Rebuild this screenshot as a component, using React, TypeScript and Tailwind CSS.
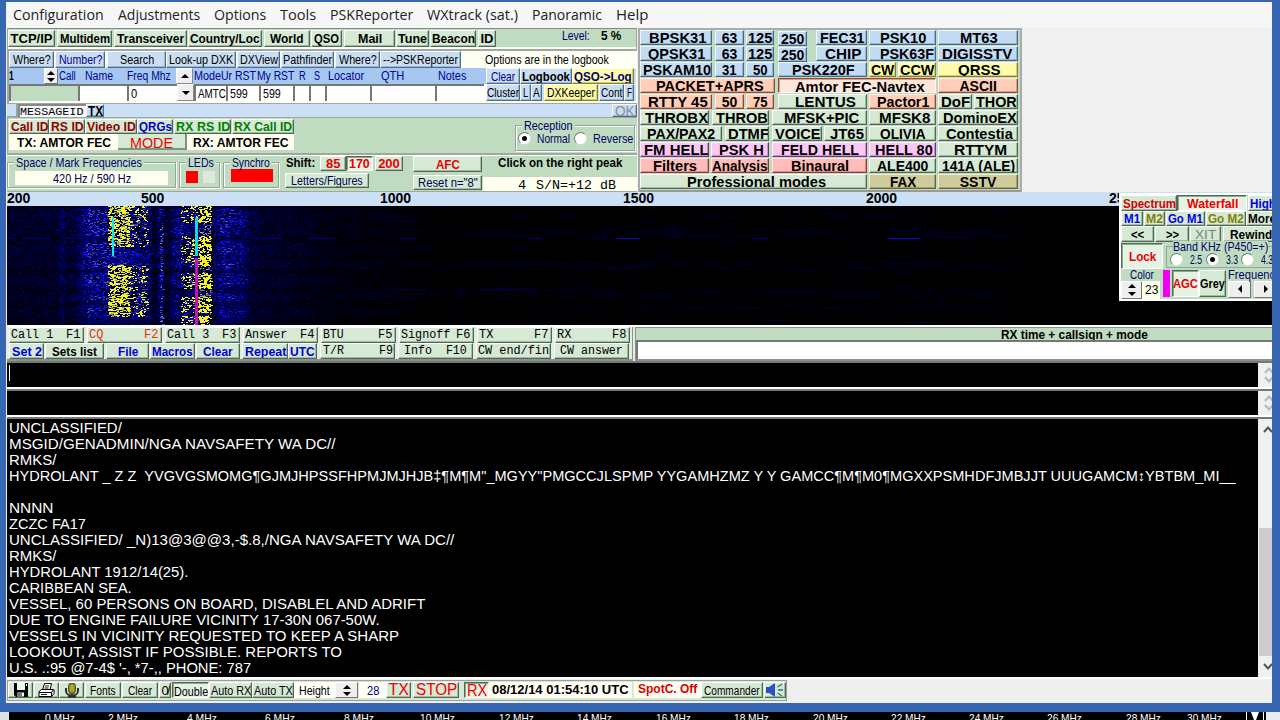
import React, { useLayoutEffect, useMemo, useRef, useState } from 'react';

type Tone = 'green' | 'blue' | 'sky' | 'salmon' | 'yellow' | 'pink' | 'red' | 'khaki' | 'sunken' | 'hatch' | 'cream';

const TONES: Record<Tone, string> = {
  green: 'bg-[#d5e9d5] border-t-white border-l-white border-b-[#4f6a52] border-r-[#4f6a52] shadow-[inset_-1px_-1px_0_#a3baa3]',
  blue: 'bg-[#c3dcf4] border-t-[#eef6ff] border-l-[#eef6ff] border-b-[#46688a] border-r-[#46688a] shadow-[inset_-1px_-1px_0_#93b4d4]',
  sky: 'bg-[#c9def3] border-t-[#f4faff] border-l-[#f4faff] border-b-[#4f6c88] border-r-[#4f6c88] shadow-[inset_-1px_-1px_0_#9db8d2]',
  salmon: 'bg-[#ffcdb8] border-t-[#ffeee6] border-l-[#ffeee6] border-b-[#8f4a38] border-r-[#8f4a38] shadow-[inset_-1px_-1px_0_#dd9c86]',
  yellow: 'bg-[#fdfba8] border-t-[#fffff0] border-l-[#fffff0] border-b-[#858322] border-r-[#858322] shadow-[inset_-1px_-1px_0_#d2d076]',
  pink: 'bg-[#fbc8f6] border-t-[#fff0ff] border-l-[#fff0ff] border-b-[#74307a] border-r-[#74307a] shadow-[inset_-1px_-1px_0_#cf92cf]',
  red: 'bg-[#ffbcb8] border-t-[#ffe8e6] border-l-[#ffe8e6] border-b-[#963636] border-r-[#963636] shadow-[inset_-1px_-1px_0_#dc8c88]',
  khaki: 'bg-[#cfcb9c] border-t-[#f0eed0] border-l-[#f0eed0] border-b-[#66633a] border-r-[#66633a] shadow-[inset_-1px_-1px_0_#a5a174]',
  sunken: 'bg-[#e6f2e4] border-t-[#4f6a52] border-l-[#4f6a52] border-b-white border-r-white shadow-[inset_1px_1px_0_#8fa890]',
  hatch: 'bg-[#fde6da] border-t-[#8f4a38] border-l-[#8f4a38] border-b-[#fff4ee] border-r-[#fff4ee] shadow-[inset_1px_1px_0_#dd9c86]',
  cream: 'bg-[#fffff0] border-transparent',
};

// Squeezes a label horizontally so that it takes exactly w pixels
const Fit: React.FC<{ w: number; className?: string; children: React.ReactNode }> = ({ w, className = '', children }) => {
  const ref = useRef<HTMLSpanElement>(null);
  const [scale, setScale] = useState(1);

  useLayoutEffect(() => {
    if (ref.current && ref.current.offsetWidth) setScale(w / ref.current.offsetWidth);
  }, [w, children]);

  return (
    <span className={`block shrink-0 whitespace-pre ${className}`} style={{ width: w }}>
      <span ref={ref} className="inline-block origin-left" style={{ transform: `scaleX(${scale})` }}>{children}</span>
    </span>
  );
};

interface BtnProps {
  tone?: Tone;
  w: number;
  c: string;
  children: React.ReactNode;
}

const Btn: React.FC<BtnProps> = ({ tone = 'green', w, c, children }) => (
  <button className={`flex h-full shrink-0 items-center justify-center overflow-hidden border leading-none ${TONES[tone]} ${c}`}>
    <Fit w={w}>{children}</Fit>
  </button>
);

const Group: React.FC<{ title: string; w: number; c: string; children: React.ReactNode }> = ({ title, w, c, children }) => (
  <div className={`flex shrink-0 flex-col border border-[#8fa890] shadow-[inset_1px_1px_0_#fff,1px_1px_0_#fff] ${c}`}>
    <div className="-mt-[7px] ml-[6px] h-[13px] self-start bg-[#c0dcc0] px-[2px] text-[13px] leading-[13px] text-[#00006a]">
      <Fit w={w}>{title}</Fit>
    </div>
    {children}
  </div>
);

const Radio: React.FC<{ on?: boolean }> = ({ on }) => (
  <span className="flex h-[13px] w-[13px] shrink-0 items-center justify-center rounded-full border border-b-[#ddd] border-r-[#ddd] border-l-[#777] border-t-[#777] bg-white">
    {on && <span className="h-[5px] w-[5px] rounded-full bg-black" />}
  </span>
);

const Arrow: React.FC<{ dir: 'up' | 'down' | 'left' | 'right' }> = ({ dir }) => {
  const d = { up: 'M0 4 4 0 8 4Z', down: 'M0 0 8 0 4 4Z', left: 'M4 0V8L0 4Z', right: 'M0 0V8L4 4Z' }[dir];
  const flat = dir === 'up' || dir === 'down';
  return <svg width={flat ? 8 : 4} height={flat ? 4 : 8} className="block"><path d={d} /></svg>;
};

const Spin: React.FC<{ c: string }> = ({ c }) => (
  <span className={`flex shrink-0 flex-col items-center justify-around border border-t-white border-l-white border-r-[#777] border-b-[#777] bg-[#efefef] ${c}`}>
    <Arrow dir="up" />
    <Arrow dir="down" />
  </span>
);

const Field: React.FC<{ c: string; children?: React.ReactNode }> = ({ c, children }) => (
  <span className={`flex h-full shrink-0 items-center overflow-hidden border-t-2 border-l-2 border-[#777] pl-[2px] leading-none text-black ${c}`}>{children}</span>
);

type Cell = [string, string, number, Tone?];

const MODES: Cell[][] = [
  [['BPSK31', 'w-[72px]', 57, 'blue'], ['63', 'ml-[3px] w-[29px]', 16, 'blue'], ['125', 'ml-[2px] w-[28px]', 24, 'blue'], ['250', 'ml-[4px] mt-px w-[29px]', 23, 'blue'], ['FEC31', 'ml-[9px] w-[51px]', 45, 'blue'], ['PSK10', 'ml-[2px] w-[67px]', 46, 'blue'], ['MT63', 'ml-[2px] w-[80px]', 38, 'blue']],
  [['QPSK31', 'w-[72px]', 57, 'blue'], ['63', 'ml-[3px] w-[29px]', 16, 'blue'], ['125', 'ml-[2px] w-[28px]', 24, 'blue'], ['250', 'ml-[4px] mt-px w-[29px]', 23, 'blue'], ['CHIP', 'ml-[9px] w-[51px]', 36, 'blue'], ['PSK63F', 'ml-[2px] w-[67px] pl-[7px]', 54, 'blue'], ['DIGISSTV', 'ml-[2px] w-[80px] pr-[7px]', 70, 'blue']],
  [['PSKAM10', 'w-[72px]', 68, 'blue'], ['31', 'ml-[3px] w-[29px]', 15, 'blue'], ['50', 'ml-[2px] w-[28px]', 15, 'blue'], ['PSK220F', 'ml-[4px] w-[89px]', 63, 'blue'], ['CW', 'ml-[2px] w-[27px]', 23, 'yellow'], ['CCW', 'ml-[2px] w-[38px]', 34, 'yellow'], ['QRSS', 'ml-[2px] w-[80px]', 43, 'yellow']],
  [['PACKET+APRS', 'w-[135px]', 108, 'salmon'], ['Amtor FEC-Navtex', 'ml-[3px] w-[158px] pt-[2px]', 130, 'hatch'], ['ASCII', 'ml-[2px] w-[80px]', 37, 'salmon']],
  [['RTTY 45', 'w-[72px]', 60, 'salmon'], ['50', 'ml-[3px] w-[29px]', 16, 'salmon'], ['75', 'ml-[2px] w-[28px]', 15, 'salmon'], ['LENTUS', 'ml-[4px] w-[89px]', 61], ['Pactor1', 'ml-[2px] w-[67px]', 52, 'salmon'], ['DoF', 'ml-[2px] w-[34px]', 29], ['THOR', 'ml-[2px] w-[44px]', 41]],
  [['THROBX', 'w-[69px]', 63], ['THROB', 'ml-[3px] w-[57px]', 52], ['MFSK+PIC', 'ml-[3px] w-[95px]', 75], ['MFSK8', 'ml-[2px] w-[67px]', 51], ['DominoEX', 'ml-[2px] w-[80px]', 74]],
  [['PAX/PAX2', 'w-[82px]', 68], ['DTMF', 'ml-[3px] w-[44px]', 41], ['VOICE', 'ml-[3px] w-[50px]', 46], ['JT65', 'ml-[2px] w-[43px]', 34], ['OLIVIA', 'ml-[2px] w-[67px]', 46], ['Contestia', 'ml-[2px] w-[80px]', 67]],
  [['FM HELL', 'w-[69px]', 65, 'pink'], ['PSK H', 'ml-[2px] w-[58px]', 45, 'pink'], ['FELD HELL', 'ml-[3px] w-[95px]', 78, 'pink'], ['HELL 80', 'ml-[2px] w-[67px]', 58, 'pink'], ['RTTYM', 'ml-[2px] w-[80px]', 53]],
  [['Filters', 'w-[69px]', 44, 'red'], ['Analysis', 'ml-[2px] w-[58px]', 56, 'red'], ['Binaural', 'ml-[3px] w-[95px]', 58, 'red'], ['ALE400', 'ml-[2px] w-[67px]', 51], ['141A (ALE)', 'ml-[2px] w-[80px]', 73]],
  [['Professional modes', 'w-[227px]', 139], ['FAX', 'ml-[2px] w-[67px]', 26, 'khaki'], ['SSTV', 'ml-[2px] w-[80px]', 37, 'khaki']],
];

const Row: React.FC<{ cells: Cell[]; c: string }> = ({ cells, c }) => (
  <div className={`flex shrink-0 ${c}`}>
    {cells.map(([text, cls, w, tone], i) => <Btn key={i} tone={tone} w={w} c={cls}>{text}</Btn>)}
  </div>
);

const MENU: [string, string, number][] = [
  ['Configuration', 'ml-[6px]', 91], ['Adjustments', 'ml-[14px]', 82], ['Options', 'ml-[14px]', 52], ['Tools', 'ml-[14px]', 36],
  ['PSKReporter', 'ml-[14px]', 83], ['WXtrack (sat.)', 'ml-[14px]', 91], ['Panoramic', 'ml-[14px]', 70], ['Help', 'ml-[14px]', 32],
];

const TOP_BUTTONS: Cell[] = [
  ['TCP/IP', 'w-[47px]', 42], ['Multidem', 'ml-[2px] w-[55px]', 50], ['Transceiver', 'ml-[2px] w-[73px]', 67], ['Country/Loc', 'ml-px w-[74px]', 70],
  ['World', 'ml-[2px] w-[46px]', 34], ['QSO', 'ml-px w-[31px]', 25], ['Mail', 'ml-[2px] w-[51px]', 24], ['Tune', 'ml-px w-[33px]', 29],
  ['Beacon', 'ml-px w-[46px]', 43], ['ID', 'ml-[2px] w-[18px]', 13],
];

const SEARCH_BUTTONS: Cell[] = [
  ['Where?', 'w-[45px]', 38, 'sky'], ['Number?', 'ml-px w-[50px] text-[#00008b]', 43, 'sky'], ['Search', 'ml-[2px] w-[59px]', 34, 'sky'],
  ['Look-up DXK', 'w-[70px]', 64, 'sky'], ['DXView', 'ml-px w-[43px]', 38, 'sky'], ['Pathfinder', 'ml-px w-[53px]', 49, 'sky'],
  ['Where?', 'ml-px w-[45px]', 38, 'sky'], ['-->PSKReporter', 'w-[81px]', 75, 'sky'],
];

const MESSAGE = [
  ['UNCLASSIFIED/', 113],
  ['MSGID/GENADMIN/NGA NAVSAFETY WA DC//', 327],
  ['RMKS/', 47],
  ['HYDROLANT _ Z Z  YVGVGSMOMG¶GJMJHPSSFHPMJMJHJB‡¶M¶M"_MGYY"PMGCCJLSPMP YYGAMHZMZ Y Y GAMCC¶M¶M0¶MGXXPSMHDFJMBJJT UUUGAMCM↕YBTBM_MI__', 1227],
  ['', 0],
  ['NNNN', 44],
  ['ZCZC FA17', 77],
  ['UNCLASSIFIED/ _N)13@3@@3,-$.8,/NGA NAVSAFETY WA DC//', 445],
  ['RMKS/', 47],
  ['HYDROLANT 1912/14(25).', 179],
  ['CARIBBEAN SEA.', 123],
  ['VESSEL, 60 PERSONS ON BOARD, DISABLEL AND ADRIFT', 416],
  ['DUE TO ENGINE FAILURE VICINITY 17-30N 067-50W.', 371],
  ['VESSELS IN VICINITY REQUESTED TO KEEP A SHARP', 390],
  ['LOOKOUT, ASSIST IF POSSIBLE. REPORTS TO', 333],
  ["U.S. .:95 @7-4$ '-, *7-,, PHONE: 787", 242],
] as [string, number][];

const MACROS = [['Call 1', 'F1'], ['CQ', 'F2'], ['Call 3', 'F3'], ['Answer', 'F4'], ['BTU', 'F5'], ['Signoff', 'F6'], ['TX', 'F7'], ['RX', 'F8']];

const LEVELS = ['#000010', '#00001e', '#00003a', '#000064', '#000096', '#1010d0', '#4848b0', '#8c8c70', '#bcbc38', '#f4f420'];

const inside = (v: number, ranges: number[][]) => ranges.some(([a, b]) => v >= a && v < b);

// Strength of the blue sidebands, by distance from the left edge
const PROFILE = [
  [0, 2.4], [50, 2.6], [54, 4.2], [60, 2.4], [70, 3.6], [80, 5.8], [94, 5.4], [100, 5.8], [141, 4.6], [147, 2.2], [152, 5],
  [158, 2], [165, 4.6], [174, 5], [204, 3], [214, 5.4], [236, 4.6], [244, 2.8], [252, 2.6], [300, 1.9], [340, 1.3], [420, 0.9],
];

const strength = (x: number) => {
  const i = PROFILE.findIndex(([px]) => px > x);
  if (i < 1) return 0;
  const [x0, a0] = PROFILE[i - 1];
  const [x1, a1] = PROFILE[i];
  return a0 + ((a1 - a0) * (x - x0)) / (x1 - x0);
};

const signal = (x: number, y: number, r: number, gain: number) => {
  const leftOn = inside(y, [[0, 41], [59, 111]]);
  const rightOn = inside(y, [[0, 17], [30, 61], [67, 83], [91, 107], [110, 119]]);
  if (x >= 101 && x < 123 && leftOn) return r > 0.55 ? 9 : r > 0.4 ? 7 : Math.floor(r * 13);
  if (x >= 123 && x < 141 && leftOn) return r > 0.82 ? 9 : Math.floor(r * 8.4);
  if (x >= 174 && x < 192 && rightOn) return r > 0.76 ? 9 : Math.floor(r * 8.6);
  if (x >= 192 && x < 204) return rightOn && r > 0.38 ? 9 : Math.floor(r * 8.5);
  if (x >= 153 && x < 156) return Math.floor(r * 7.6);
  return Math.min(6, Math.floor((0.25 + r * 0.85) * strength(x) * gain));
};

const Waterfall: React.FC = () => {
  const paths = useMemo(() => {
    let seed = 77;
    const rnd = () => {
      seed = (seed * 1664525 + 1013904223) >>> 0;
      return seed / 4294967296;
    };
    const out = LEVELS.map(() => '');
    for (let y = 0; y < 119; y++) {
      const gain = 0.7 + 0.45 * Math.abs(Math.sin(y / 11 + Math.sin(y / 5)));
      let x = 0;
      while (x < 420) {
        const len = 1 + Math.floor(rnd() * 2.3);
        const level = signal(x, y, rnd(), gain);
        if (level > 0) out[Math.min(level, 9)] += `M${x} ${y}h${len}v1h-${len}z`;
        x += len;
      }
      // weak horizontal streaks to the right of the signal
      const streak = inside(y, [[10, 12], [22, 33], [56, 64], [82, 92], [100, 104]]);
      for (let i = 0; i < (streak ? 24 : 3); i++) {
        const sx = 250 + Math.floor(rnd() * 750);
        const len = 6 + Math.floor(rnd() * 20);
        out[Math.floor(rnd() * 1.7)] += `M${sx} ${y}h${len}v1h-${len}z`;
      }
    }
    return out;
  }, []);

  return (
    <svg width="1265" height="119" className="block shrink-0 bg-black" shapeRendering="crispEdges">
      {paths.map((d, i) => <path key={i} d={d} fill={LEVELS[i]} />)}
      <path d="M0 32.500h8M14 32.500h30M58 32.500h20M245 32.500h30M300 32.500h28M394 32.500h14M520 32.500h14M745 32.500h16" stroke="#000080" />
      <path d="M610 32.500h22M881 32.500h32" stroke="#0808c8" />
      <path d="M470 83.500h60M390 83.500h30" stroke="#000044" />
      <rect x="105" y="11" width="2" height="39" fill="#10e8f0" />
      <rect x="188" y="12" width="3" height="38" fill="#10d8e8" />
      <rect x="188" y="52" width="3" height="67" fill="#c414b4" />
    </svg>
  );
};

const ScrollChevron: React.FC<{ up?: boolean; c: string }> = ({ up, c }) => (
  <svg width="10" height="7" viewBox="0 0 10 7" className={`block shrink-0 ${c}`}>
    <path d={up ? 'M1 6 5 1.5 9 6' : 'M1 1 5 5.5 9 1'} fill="none" stroke="currentColor" strokeWidth="2" />
  </svg>
);

const InputStrip: React.FC<{ cursor?: boolean; c: string }> = ({ cursor, c }) => (
  <div className={`flex shrink-0 border-b-2 border-white bg-black ${c}`}>
    <div className="flex-1 pl-[2px] pt-[2px]">{cursor && <div className="h-[16px] w-px bg-white" />}</div>
    <div className="flex w-[14px] flex-col items-end justify-between overflow-hidden bg-[#f0f0f0] py-[4px] text-[#b8b8b8]">
      <ScrollChevron up c="-mr-[2px]" />
      <ScrollChevron c="-mr-[2px]" />
    </div>
  </div>
);

const LeftPanels: React.FC = () => (
  <div className="flex w-[630px] shrink-0 flex-col">
    <div className="flex h-[22px] border border-[#a0a8a0] border-t-[#888] bg-[#c0dcc0] shadow-[inset_0_-2px_0_#fff]">
      <Row cells={TOP_BUTTONS} c="h-[18px] pt-px text-[13px] font-bold" />
      <div className="ml-[66px] flex text-[13px] leading-[14px]">
        <Fit w={28} className="text-[#00006a]">Level:</Fit>
        <Fit w={20} className="ml-[11px] font-bold">5 %</Fit>
      </div>
    </div>

    {/* Logbook */}
    <div className="flex h-[53px] shrink-0 border-l-2 border-t border-[#a0a8a0] bg-[#fffff4] text-[12px]">
      <div className="flex w-[477px] shrink-0 flex-col">
        <div className="flex h-[17px] w-full">
          <Row cells={SEARCH_BUTTONS} c="h-[17px] text-[13px]" />
        </div>
        <div className="flex h-[16px] items-center bg-[#a6c8f0] leading-none text-[#000090]">
          <Fit w={5} className="font-bold text-black">1</Fit>
          <Spin c="ml-[30px] h-[16px] w-[14px]" />
          <Fit w={17} className="ml-px">Call</Fit>
          <Fit w={28} className="ml-[9px]">Name</Fit>
          <Fit w={44} className="ml-[14px]">Freq Mhz</Fit>
          <span className="ml-[5px] flex h-[16px] w-[17px] shrink-0 items-center justify-center border border-b-[#888] border-r-[#888] border-white bg-[#efefef] text-black"><Arrow dir="up" /></span>
          <Fit w={27} className="ml-px">Mode</Fit>
          <Fit w={35}>Ur RST</Fit>
          <Fit w={37} className="ml-px">My RST</Fit>
          <Fit w={7} className="ml-[5px]">R</Fit>
          <Fit w={6} className="ml-[8px]">S</Fit>
          <Fit w={36} className="ml-[8px]">Locator</Fit>
          <Fit w={23} className="ml-[17px]">QTH</Fit>
          <Fit w={28} className="ml-[34px]">Notes</Fit>
        </div>
        <div className="flex h-[17px] text-[13px]">
          <Field c="w-[69px] bg-[#c0dcc0]" />
          <Field c="w-[49px] bg-white" />
          <Field c="w-[50px] bg-white"><Fit w={6}>0</Fit></Field>
          <span className="flex h-full w-[17px] items-center justify-center border border-b-[#888] border-r-[#888] border-white bg-[#efefef]"><Arrow dir="down" /></span>
          <Field c="w-[32px] border-l-0 bg-white"><Fit w={28}>AMTC</Fit></Field>
          <Field c="w-[33px] bg-white"><Fit w={18}>599</Fit></Field>
          <Field c="w-[34px] bg-white"><Fit w={18}>599</Fit></Field>
          <Field c="w-[16px] bg-white" />
          <Field c="w-[16px] bg-white" />
          <Field c="w-[45px] bg-white" />
          <Field c="w-[65px] bg-white" />
          <Field c="w-[49px] bg-white" />
        </div>
      </div>
      <div className="flex w-[150px] flex-col">
        <div className="flex h-[17px] shrink-0 items-center leading-none text-[13px]"><Fit w={124} className="-ml-px">Options are in the logbook</Fit></div>
        <div className="flex h-[16px] shrink-0 bg-[#c9def3] text-[13px]">
          <Btn tone="sky" w={24} c="w-[34px] text-[#00008b]">Clear</Btn>
          <Btn tone="sky" w={48} c="w-[52px] font-bold">Logbook</Btn>
          <Btn tone="yellow" w={58} c="w-[62px] font-bold text-[#00006a]">QSO-&gt;Log</Btn>
        </div>
        <div className="flex h-[17px] shrink-0 bg-[#c9def3] text-[13px]">
          <Btn tone="sky" w={32} c="w-[34px]">Cluster</Btn>
          <Btn tone="sky" w={5} c="w-[11px]">L</Btn>
          <Btn tone="sky" w={7} c="w-[11px]">A</Btn>
          <Btn tone="yellow" w={48} c="ml-[2px] w-[54px]">DXKeeper</Btn>
          <Btn tone="sky" w={21} c="ml-px w-[25px]">Cont</Btn>
          <Btn tone="sky" w={5} c="w-[10px]">F</Btn>
        </div>
      </div>
    </div>

    <div className="flex h-[14px] shrink-0 border-t border-[#a0a8a0] bg-[#cbdff6]">
      <div className="h-full w-[11px] border-r-2 border-b border-[#8aa]" />
      <div className="flex w-[68px] overflow-hidden border-t-2 border-l-2 border-[#888] bg-[#f4f8fa] font-['Liberation_Mono'] text-[11px] leading-[13px]"><Fit w={63}>MESSAGEID</Fit></div>
      <Btn tone="sky" w={15} c="w-[18px] text-[14px] font-bold">TX</Btn>
      <Btn tone="sky" w={20} c="ml-auto w-[25px] text-[15px] text-[#8a9299]">OK</Btn>
    </div>

    {/* Identifiers */}
    <div className="flex h-[36px] shrink-0 justify-between border-t border-l border-[#a0a8a0] bg-[#c0dcc0]">
      <div className="flex w-[288px] flex-col pt-px pl-px text-[13px] font-bold">
        <Row
          c="h-[15px]"
          cells={[['Call ID', 'w-[40px] text-[#900000]', 37], ['RS ID', 'w-[36px] text-[#900000]', 33], ['Video ID', 'w-[52px] text-[#900000]', 49], ['QRGs', 'w-[36px] text-[#0000d0]', 33], ['RX RS ID', 'ml-px w-[57px] text-[#008000]', 54], ['RX Call ID', 'ml-px w-[62px] text-[#008000]', 58]]}
        />
        <div className="flex h-[16px]">
          <Btn tone="cream" w={94} c="w-[109px]">TX: AMTOR FEC</Btn>
          <button className="flex w-[69px] items-center justify-center border-r-2 border-b-2 border-[#7c967c] bg-[#d5e9d5] pt-[2px] text-[15px] font-normal leading-none text-[#f00000]"><Fit w={43}>MODE</Fit></button>
          <Btn tone="cream" w={96} c="w-[107px]">RX: AMTOR FEC</Btn>
        </div>
      </div>
      <Group title="Reception" w={49} c="mt-[7px] mr-[2px] h-[26px] w-[120px]">
        <div className="flex items-center pl-[2px] text-[13px] leading-none text-[#000060]">
          <Radio on />
          <Fit w={33} className="ml-[6px]">Normal</Fit>
          <span className="ml-[4px]"><Radio /></span>
          <Fit w={40} className="ml-[6px]">Reverse</Fit>
        </div>
      </Group>
    </div>

    {/* Tuning */}
    <div className="flex h-[39px] shrink-0 border-t-2 border-b border-[#a0a8a0] bg-[#c0dcc0] shadow-[inset_0_1px_0_#fff]">
      <Group title="Space / Mark Frequencies" w={126} c="mt-[7px] h-[26px] w-[169px]">
        <div className="mx-[7px] mt-[2px] flex h-[14px] items-center justify-center bg-[#fffff0] text-[13px] leading-none text-[#000050]"><Fit w={78}>420 Hz / 590 Hz</Fit></div>
      </Group>
      <Group title="LEDs" w={26} c="ml-[3px] mt-[7px] h-[26px] w-[41px]">
        <div className="flex gap-[5px] pl-[6px] pt-[2px]">
          <div className="h-[12px] w-[12px] bg-[#ff0000]" />
          <div className="h-[12px] w-[12px] bg-[#dfe8df]" />
        </div>
      </Group>
      <Group title="Synchro" w={38} c="ml-[3px] mt-[7px] h-[26px] w-[56px]">
        <div className="ml-[7px] h-[13px] w-[42px] bg-[#ff0000]" />
      </Group>
      <div className="ml-[6px] flex w-[120px] flex-col pt-[1px]">
        <div className="flex h-[15px] text-[13px] font-bold leading-[14px]">
          <Fit w={29} className="ml-px">Shift:</Fit>
          <Row c="ml-[5px] h-[15px] text-[#e80000]" cells={[['85', 'w-[26px]', 14], ['170', 'w-[27px]', 21, 'sunken'], ['200', 'ml-[2px] w-[28px]', 22]]} />
        </div>
        <div className="mt-[2px] flex h-[15px] text-[13px]"><Btn w={72} c="w-[84px] text-[#000050]">Letters/Figures</Btn></div>
      </div>
      <div className="ml-[8px] flex w-[70px] flex-col pt-[1px] text-[13px]">
        <div className="flex h-[16px]"><Btn w={24} c="w-[69px] font-bold text-[#e80000]">AFC</Btn></div>
        <div className="mt-[3px] flex h-[15px]"><Btn w={60} c="w-[69px] text-[#000050]">Reset n="8"</Btn></div>
      </div>
      <div className="flex w-[154px] flex-col">
        <div className="flex h-[22px] justify-center text-[13px] font-bold leading-[15px]"><Fit w={124}>Click on the right peak</Fit></div>
        <div className="flex h-[14px] overflow-hidden bg-[#fffff0] pl-[35px] font-['Liberation_Mono'] text-[12px] leading-[18px]">
          <Fit w={8}>4</Fit>
          <Fit w={80} className="ml-[10px]">S/N=+12 dB</Fit>
        </div>
      </div>
    </div>
  </div>
);

const Receiver: React.FC = () => (
  <div className="absolute right-0 top-[1px] flex h-[108px] w-[153px] flex-col overflow-hidden border-l-2 border-t-2 border-b-2 border-white bg-[#c0dcc0] text-[13px] font-bold">
    <Row c="h-[16px]" cells={[['Spectrum', 'w-[56px] text-[#d00000]', 53], ['Waterfall', 'w-[70px] text-[#e80000]', 51, 'sunken'], ['High', 'ml-px w-[30px] text-[#0000e0]', 26]]} />
    <Row c="h-[15px]" cells={[['M1', 'w-[22px] text-[#0000e0]', 16], ['M2', 'ml-px w-[21px] text-[#808000]', 17], ['Go M1', 'ml-px w-[39px] text-[#0000e0]', 35], ['Go M2', 'ml-px w-[40px] text-[#808000]', 36], ['More', 'w-[32px]', 28]]} />
    <div className="flex h-[16px]">
      <Row c="h-[16px]" cells={[['<<', 'w-[33px]', 13], ['>>', 'ml-px w-[34px]', 13], ['XIT', 'ml-px w-[31px] font-normal text-[#708870]', 21], ['Rewind', 'ml-[2px] w-[56px]', 42]]} />
    </div>
    <div className="flex h-[28px] pt-px">
      <div className="h-[26px] shrink-0"><Btn tone="sunken" w={27} c="w-[42px] text-[#e80000]">Lock</Btn></div>
      <div className="ml-[3px] mt-[3px] flex h-[22px] w-[116px] shrink-0 flex-col border border-[#8fa890] font-normal">
        <div className="-mt-[6px] ml-[6px] self-start bg-[#c0dcc0] leading-[12px] text-[#00006a]"><Fit w={95}>Band KHz (P450=+)</Fit></div>
        <div className="flex items-center pl-[3px] leading-none text-[#000060]">
          <Radio /><Fit w={12} className="ml-[7px]">2.5</Fit>
          <span className="ml-[4px]"><Radio on /></span><Fit w={12} className="ml-[7px]">3.3</Fit>
          <span className="ml-[3px]"><Radio /></span><Fit w={12} className="ml-[7px]">4.3</Fit>
        </div>
      </div>
    </div>
    <div className="flex h-[30px] font-normal leading-none">
      <div className="flex w-[41px] shrink-0 flex-col">
        <Fit w={24} className="ml-[9px] h-[11px] text-[12px] leading-[11px] text-[#00006a]">Color</Fit>
        <div className="flex h-[18px]">
          <Spin c="w-[21px]" />
          <div className="flex w-[18px] items-center justify-center bg-[#fffff0]"><Fit w={13}>23</Fit></div>
        </div>
      </div>
      <div className="ml-px h-[27px] w-[7px] shrink-0 bg-[#f000f0]" />
      <div className="ml-[2px] flex h-[27px] shrink-0 font-bold">
        <Btn tone="sunken" w={25} c="w-[27px] text-[#e80000]">AGC</Btn>
        <Btn w={25} c="w-[27px]">Grey</Btn>
      </div>
      <div className="ml-[2px] flex w-[60px] shrink-0 flex-col">
        <Fit w={53} className="h-[11px] leading-[11px] text-[12px] text-[#00006a]">Frequency</Fit>
        <div className="flex h-[17px] gap-[3px]">
          <span className="flex w-[23px] items-center justify-center border border-white border-r-[#777] border-b-[#777] bg-[#efefef]"><Arrow dir="left" /></span>
          <span className="flex w-[23px] items-center justify-center border border-white border-r-[#777] border-b-[#777] bg-[#efefef]"><Arrow dir="right" /></span>
        </div>
      </div>
    </div>
  </div>
);

const MacroBar: React.FC = () => (
  <div className="flex h-[36px] shrink-0 border-t-2 border-white bg-[#e4ece4]">
    <div className="flex w-[626px] shrink-0 flex-col border-r border-b-2 border-[#8a958a] pl-[2px]">
      <div className="flex h-[16px] gap-[3px] font-['Liberation_Mono'] text-[12px]">
        {MACROS.map(([name, key]) => (
          <button key={key} className={`flex h-[16px] w-[75px] shrink-0 items-center justify-between border pl-px pr-[3px] leading-none ${TONES.green} ${key === 'F2' ? 'text-[#e03020]' : 'text-black'}`}>
            <Fit w={name.length * 7}>{name}</Fit>
            <Fit w={14}>{key}</Fit>
          </button>
        ))}
      </div>
      <div className="flex h-[16px]">
        <Row
          c="h-[16px] text-[13px] font-bold text-[#0000d8]"
          cells={[['Set 2', 'w-[35px]', 30], ['Sets list', 'ml-px w-[59px] text-black', 45], ['File', 'ml-[2px] w-[43px]', 20], ['Macros', 'ml-px w-[45px]', 41], ['Clear', 'ml-px w-[44px]', 30], ['Repeat', 'ml-[2px] w-[46px]', 41], ['UTC', 'w-[29px]', 25]]}
        />
        <Row
          c="ml-[3px] h-[16px] gap-[3px] font-['Liberation_Mono'] text-[12px]"
          cells={[['T/R     F9', 'w-[75px]', 70], ['Info  F10', 'w-[75px]', 63], ['CW end/fin', 'w-[75px]', 71], ['CW answer', 'w-[75px]', 63]]}
        />
      </div>
    </div>
    <div className="ml-[2px] flex flex-1 flex-col border-l border-b-2 border-[#8a958a]">
      <div className="flex h-[13px] justify-center overflow-hidden border-t border-[#8a958a] bg-[#c0dcc0] pl-[241px] text-[12px] font-bold leading-[15px]"><Fit w={147}>RX time + callsign + mode</Fit></div>
      <div className="flex-1 border-l-2 border-t-2 border-[#777] bg-white" />
    </div>
  </div>
);

const StatusBar: React.FC = () => (
  <div className="flex h-[27px] shrink-0 border-t-2 border-white bg-[#efefef]">
    <div className="mt-[1px] flex h-[21px] border border-[#9aa09a] bg-[#d8e8d8] pt-px pb-[2px] text-[13px]">
      <button className={`flex h-full w-[25px] items-center justify-center border ${TONES.green}`}>
        <svg width="14" height="14" viewBox="0 0 14 14"><path d="M0 0h14v14H2L0 12Z" /><path d="M3 0h8v7H3Z" fill="#eef6ee" /><path d="M3 9h7v5H3Z" fill="#777" /><path d="M8 10h2v3H8Z" fill="#fff" /><path d="M12 1h1v2h-1Z" fill="#fff" /></svg>
      </button>
      <button className={`ml-px flex h-full w-[25px] items-center justify-center border ${TONES.green}`}>
        <svg width="17" height="14" viewBox="0 0 17 14" fill="#fff" stroke="#000"><path d="M4.500 7 6.500.5h7L12 7" /><path d="M1 8.500 3.500 6.500h12L13.500 9.500H1Z" /><path d="M1 9.500h12.500v4H1ZM13.500 13.500 16 10.500v-4" /><path d="M3 11.500h6M7 3h4M6.500 5h4" strokeWidth=".9" /></svg>
      </button>
      <button className={`flex h-full w-[25px] items-center justify-center border ${TONES.green}`}>
        <svg width="14" height="15" viewBox="0 0 14 15"><path d="M1 5v3c0 6 12 6 12 0V5M7 11v3M3 14h8" fill="none" stroke="#333" strokeWidth="2" /><rect x="3.500" y="0" width="7" height="11" rx="3.500" fill="#8a8a20" stroke="#4c4c10" /><path d="M5 3h4M5 5h4M5 7h4" stroke="#c8c860" /></svg>
      </button>
      <Row
        c="h-full text-[13px]"
        cells={[['Fonts', 'ml-px w-[36px]', 26], ['Clear', 'ml-px w-[36px]', 24], ['0̸', 'ml-px w-[12px]', 7], ['Double', 'ml-px w-[37px] pt-[2px]', 34, 'sunken'], ['Auto RX', 'w-[43px]', 40], ['Auto TX', 'w-[42px]', 39]]}
      />
      <div className="flex w-[41px] items-center justify-center bg-[#fffff8] leading-none"><Fit w={31}>Height</Fit></div>
      <Spin c="w-[23px]" />
      <div className="ml-px flex w-[27px] items-center justify-center bg-[#fffff8] leading-none text-[#00006a]"><Fit w={12}>28</Fit></div>
      <Row c="h-full text-[16px] text-[#f00000]" cells={[['TX', 'w-[25px]', 20], ['STOP', 'ml-[2px] w-[46px]', 41], ['RX', 'ml-[5px] w-[25px] pt-[2px]', 20, 'sunken']]} />
      <div className="flex w-[143px] items-center justify-center bg-[#fffff4] pb-px font-bold leading-none"><Fit w={137}>08/12/14 01:54:10 UTC</Fit></div>
      <div className="ml-[2px] flex w-[67px] items-center justify-center bg-[#fffff4] pb-[3px] font-bold leading-none text-[#d80000]"><Fit w={59}>SpotC. Off</Fit></div>
      <Btn w={56} c="w-[62px]">Commander</Btn>
      <button className={`ml-px flex h-full w-[22px] items-center justify-center border ${TONES.green}`}>
        <svg width="18" height="14" viewBox="0 0 18 14"><path d="M0 4h3L9 0v14L3 10H0Z" fill="#2850c8" /><path d="M11.500 4 16 1M12 7h5M11.500 10l4.500 3" stroke="#3a6a7a" strokeWidth="1.300" /></svg>
      </button>
    </div>
  </div>
);

const FREQS: [string, string, number][] = [
  ['0 MHz', 'ml-[36px]', 30], ['2 MHz', 'ml-[33px]', 30], ['4 MHz', 'ml-[49px]', 30], ['6 MHz', 'ml-[48px]', 30], ['8 MHz', 'ml-[49px]', 30],
  ['10 MHz', 'ml-[46px]', 35], ['12 MHz', 'ml-[44px]', 35], ['14 MHz', 'ml-[43px]', 35], ['16 MHz', 'ml-[44px]', 35], ['18 MHz', 'ml-[43px]', 35],
  ['20 MHz', 'ml-[44px]', 35], ['22 MHz', 'ml-[43px]', 35], ['24 MHz', 'ml-[43px]', 35], ['26 MHz', 'ml-[43px]', 35], ['28 MHz', 'ml-[44px]', 35],
  ['30 MHz', 'ml-[26px]', 35],
];

const TICKS: [string, string, number][] = [
  ['200', '', 23], ['500', 'ml-[111px]', 23], ['1000', 'ml-[216px]', 31], ['1500', 'ml-[212px]', 31], ['2000', 'ml-[212px]', 31], ['2500', 'ml-[212px]', 31],
];

export default function App() {
  return (
    <div className="flex h-[720px] w-[1280px] flex-col overflow-hidden bg-[#3767b2] pt-[2px] font-['Liberation_Sans',sans-serif] text-black">
      <div className="ml-[6px] flex h-[701px] w-[1266px] shrink-0 flex-col overflow-hidden bg-[#f0f0f0] pl-px">
        <div className="flex h-[26px] shrink-0 items-center bg-[#f6f6f6] pb-[2px] font-['Open_Sans',sans-serif] text-[15px] leading-none text-[#222]">
          {MENU.map(([text, cls, w]) => <Fit key={text} w={w} className={cls}>{text}</Fit>)}
        </div>

        <div className="flex h-[164px] shrink-0">
          <LeftPanels />
          <div className="ml-px flex h-[164px] w-[384px] shrink-0 flex-col border-2 border-l-[#aaa] border-t-[#aaa] border-r-[#aaa] border-b-[#999] bg-[#c0dcc0] text-[14px] font-bold">
            {MODES.map((cells, i) => <Row key={i} cells={cells} c="h-[15px] mb-px" />)}
          </div>
        </div>

        <div className="relative flex shrink-0 flex-col">
          <div className="flex h-[14px] shrink-0 overflow-hidden bg-[#cbdff5] text-[14px] font-bold leading-[13px]">
            {TICKS.map(([text, cls, w]) => <Fit key={text} w={w} className={cls}>{text}</Fit>)}
          </div>
          <Waterfall />
          <Receiver />
        </div>

        <MacroBar />
        <InputStrip cursor c="h-[28px] border-t-2 border-t-[#777]" />
        <InputStrip c="h-[28px] border-t-2 border-t-[#777]" />

        <div className="flex h-[260px] shrink-0 border-t-2 border-t-[#777] bg-black">
          <div className="flex-1 overflow-hidden pl-[2px] pt-px text-[14px] text-white">
            {MESSAGE.map(([line, w], i) => (
              <div key={i} className="h-[16px] leading-[16px]">{line && <Fit w={w}>{line}</Fit>}</div>
            ))}
          </div>
          <div className="flex w-[14px] flex-col items-end overflow-hidden bg-[#f0f0f0] pt-[7px] pb-[7px] text-[#555]">
            <ScrollChevron up c="-mr-[1px]" />
            <div className="mt-[95px] mb-[7px] w-[13px] flex-1 bg-[#cdcbcd]" />
            <ScrollChevron c="-mr-[1px]" />
          </div>
        </div>

        <StatusBar />
      </div>

      {/* Band scope behind the main window */}
      <div className="mt-[9px] flex h-[8px] shrink-0 overflow-hidden bg-black text-[11px] leading-[12px] text-white">
        <div className="w-[9px] shrink-0 bg-[#e0e0e0]" />
        {FREQS.map(([text, cls, w]) => <Fit key={text} w={w} className={cls}>{text}</Fit>)}
        <div className="ml-auto flex w-[18px] shrink-0 justify-center border-x border-white"><svg width="10" height="8"><path d="M1 0h8L6 8H4Z" fill="#fff" /></svg></div>
        <div className="ml-[2px] w-[14px] shrink-0 bg-[#e6ecf2]" />
      </div>
    </div>
  );
}
